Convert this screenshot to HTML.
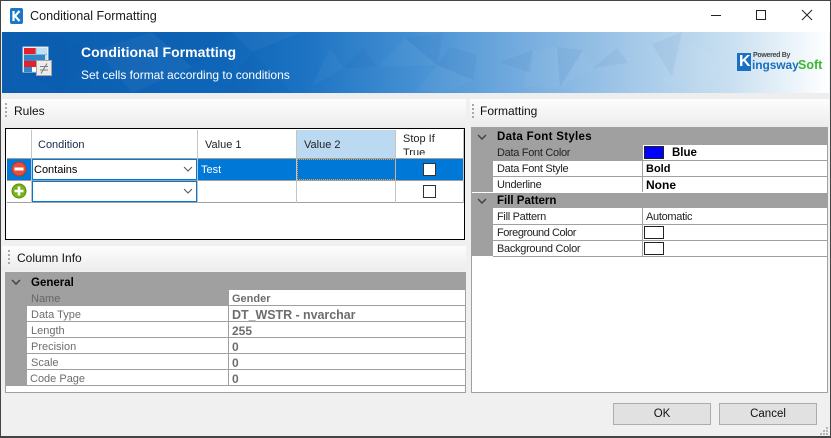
<!DOCTYPE html>
<html><head><meta charset="utf-8"><style>
html,body{margin:0;padding:0}
body{width:831px;height:438px;overflow:hidden;position:relative;background:#f0f0f0;font-family:"Liberation Sans",sans-serif;color:#000}
div{position:absolute;box-sizing:border-box}
.t{white-space:nowrap;font-size:11px;line-height:16px;height:16px}
.l{letter-spacing:-.3px}
.b{font-weight:bold}
.g{color:#6d6d6d}
.w{background:#fff}
.ln{background:#a0a0a0}
.grip{width:2px;height:14px;background:repeating-linear-gradient(#a8a8a8 0 2px,transparent 2px 4px)}
.bar{background:linear-gradient(#fdfdfd,#ececec)}
.btn{background:#e1e1e1;border:1px solid #adadad;text-align:center;font-size:11.500px;line-height:20px;height:22px;width:98px;color:#111}
</style></head><body>
<div class="w" style="left:0;top:0;width:831px;height:32px"></div>
<div style="left:0;top:0;width:831px;height:438px;border:1px solid #444;border-width:1px 1px 2px 1px;pointer-events:none;z-index:9"></div>
<svg style="position:absolute;left:10px;top:8px" width="14" height="16"><rect width="13" height="16" rx="2" fill="#1976c8"/><path d="M3.500 3v10M9.500 3L5 8l4.500 5" stroke="#fff" stroke-width="2.200" fill="none"/></svg>
<div class="t" style="left:30px;top:8px;font-size:12.600px;color:#1a1a1a">Conditional Formatting</div>
<svg style="position:absolute;left:700px;top:5px" width="131" height="22" fill="none" stroke="#222"><path d="M11 10.500h10"/><rect x="56.500" y="5.500" width="9" height="9"/><path d="M102 5l10 10M112 5l-10 10"/></svg>

<svg style="position:absolute;left:2px;top:32px" width="827" height="61">
<defs><linearGradient id="bg" x1="0" x2="1" y1="0" y2="0"><stop offset="0" stop-color="#0b5db0"/><stop offset=".27" stop-color="#0f66b8"/><stop offset=".36" stop-color="#1b72c2"/><stop offset=".5" stop-color="#4590d3"/><stop offset=".6" stop-color="#6aa6dc"/><stop offset=".76" stop-color="#a3c8e8"/><stop offset=".88" stop-color="#c8dff0"/><stop offset=".95" stop-color="#e8f2f9"/><stop offset="1" stop-color="#fff"/></linearGradient></defs>
<rect width="827" height="61" fill="url(#bg)"/>
<g fill="#003f8a" fill-opacity=".05">
<polygon points="40,0 95,18 60,61 20,40"/><polygon points="150,0 230,0 190,35"/><polygon points="250,20 290,61 220,61"/>
<polygon points="341,36 376,35 361,16"/><polygon points="403,6 441,1 435,33"/><polygon points="435,33 448,15 475,23 471,48"/><polygon points="498,30 531,18 528,41"/><polygon points="555,15 581,18 558,55"/><polygon points="591,36 615,16 626,31"/><polygon points="650,12 680,0 670,45"/>
</g>
<g fill="#fff" fill-opacity=".035">
<polygon points="95,18 150,0 190,35 130,61"/><polygon points="230,0 300,0 250,20"/><polygon points="328,16 341,36 310,55"/><polygon points="403,6 435,33 376,35"/><polygon points="436,33 471,48 445,60 413,60"/><polygon points="531,18 555,15 558,55 520,55"/><polygon points="581,18 591,36 558,55"/><polygon points="690,10 720,30 700,61 660,50"/>
</g>
</svg>
<div style="left:1px;top:93px;width:829px;height:6px;background:#eeeeee"></div>

<svg style="position:absolute;left:22px;top:46px" width="32" height="31">
<rect x="1" y="1" width="25" height="25" fill="#fff" stroke="#c9dcea"/>
<rect x="2" y="2" width="12" height="6" fill="#e8202a"/><rect x="14" y="2" width="11" height="6" fill="#bfe0f2"/>
<rect x="14" y="9" width="11" height="6" fill="#bfe0f2"/>
<rect x="2" y="9" width="21" height="6" fill="#2f86c8"/><rect x="2" y="15" width="14" height="6" fill="#e8202a"/><rect x="2" y="21" width="8" height="5" fill="#2f86c8"/>
<path d="M14 2v6M2 8.500h23" stroke="#8fb7d2"/>
<rect x="14.500" y="14.500" width="15" height="15" fill="#ececec" stroke="#a5a5a5"/>
<path d="M18 20.500h8M18 24h8M25 17.500l-6 10" stroke="#808080" stroke-width="1.100" fill="none"/>
</svg>
<div class="t b" style="left:81px;top:44px;font-size:14px;letter-spacing:.05px;color:#fff">Conditional Formatting</div>
<div class="t" style="left:81px;top:67px;font-size:12px;color:#fff">Set cells format according to conditions</div>

<div style="left:737px;top:53px;width:14px;height:18px;background:#1a70c4"></div>
<div class="t b" style="left:739px;top:53px;font-size:16px;line-height:18px;height:18px;color:#fff">K</div>
<div class="t b" style="left:753px;top:51px;font-size:7px;line-height:10px;height:10px;letter-spacing:-.3px;color:#444">Powered By</div>
<div class="t b" style="left:752px;top:57px;font-size:12px;letter-spacing:-.1px;color:#1a6fc0">ingsway</div>
<div class="t b" style="left:798px;top:57px;font-size:12.500px;color:#3cb82e">Soft</div>

<div class="bar" style="left:2px;top:99px;width:464px;height:29px"></div>
<div class="bar" style="left:470px;top:99px;width:359px;height:28px"></div>
<div class="grip" style="left:5px;top:103px"></div>
<div class="t" style="left:14px;top:103px;font-size:12px;color:#111">Rules</div>
<div class="grip" style="left:472px;top:104px"></div>
<div class="t" style="left:480px;top:103px;font-size:12px;color:#111">Formatting</div>

<!-- Rules grid -->
<div class="w" style="left:5px;top:128px;width:460px;height:112px;border:1px solid #000"></div>
<div style="left:297px;top:130px;width:99px;height:28px;background:#bbdaf2"></div>
<div style="left:7px;top:159px;width:456px;height:21px;background:#0078d7"></div>
<div class="ln" style="left:7px;top:158px;width:456px;height:1px"></div>
<div class="ln" style="left:7px;top:180px;width:456px;height:1px"></div>
<div class="ln" style="left:7px;top:202px;width:456px;height:1px"></div>
<div style="left:31px;top:130px;width:1px;height:73px;background:#c4c4c4"></div>
<div style="left:197px;top:130px;width:1px;height:73px;background:#c4c4c4"></div>
<div style="left:296px;top:130px;width:1px;height:73px;background:#c4c4c4"></div>
<div style="left:395px;top:130px;width:1px;height:73px;background:#c4c4c4"></div>
<div style="left:463px;top:130px;width:1px;height:73px;background:#c4c4c4"></div>
<div class="t" style="left:38px;top:137px;color:#152a4a">Condition</div>
<div class="t" style="left:205px;top:137px;color:#222">Value 1</div>
<div class="t" style="left:304px;top:137px;color:#222">Value 2</div>
<div style="left:396px;top:130px;width:66px;height:25px;overflow:hidden"><div class="t" style="left:7px;top:2px;line-height:14px;white-space:normal;width:40px;height:28px;color:#222">Stop If True</div></div>

<div class="w" style="left:32px;top:159px;width:165px;height:21px;border:1px solid #0078d7"></div>
<div class="w" style="left:32px;top:181px;width:165px;height:21px;border:1px solid #0078d7"></div>
<div class="t" style="left:34px;top:162px">Contains</div>
<svg style="position:absolute;left:183px;top:166px" width="11" height="30" fill="none" stroke="#555"><path d="M1 1l4 4 4-4M1 23l4 4 4-4"/></svg>
<div class="t" style="left:201px;top:162px;color:#fff">Test</div>
<div style="left:297px;top:159px;width:99px;height:21px;border:1px dotted #e8a040"></div>
<div class="w" style="left:423px;top:163px;width:13px;height:13px;border:1px solid #333"></div>
<div class="w" style="left:423px;top:185px;width:13px;height:13px;border:1px solid #333"></div>
<svg style="position:absolute;left:11px;top:161px" width="16" height="40">
<circle cx="8" cy="8" r="7" fill="#e4503c" stroke="#c0331f"/><rect x="3.500" y="6.500" width="9" height="3" fill="#fff"/>
<circle cx="8" cy="30" r="7" fill="#7ab317" stroke="#5b8c10"/><path d="M8 25.500v9M3.500 30h9" stroke="#fff" stroke-width="2.600"/>
</svg>

<!-- Column Info -->
<div class="bar" style="left:2px;top:246px;width:464px;height:25px"></div>
<div class="grip" style="left:8px;top:250px"></div>
<div class="t" style="left:17px;top:250px;font-size:12px;color:#111">Column Info</div>
<div class="w" style="left:5px;top:272px;width:461px;height:121px;border:1px solid #a0a0a0"></div>
<div style="left:5px;top:272px;width:461px;height:18px;background:#a0a0a0"></div>
<div style="left:5px;top:290px;width:22px;height:96px;background:#a0a0a0"></div>
<div style="left:27px;top:290px;width:201px;height:15px;background:#a0a0a0"></div>
<div class="ln" style="left:27px;top:305px;width:438px;height:1px"></div>
<div class="ln" style="left:27px;top:321px;width:438px;height:1px"></div>
<div class="ln" style="left:27px;top:337px;width:438px;height:1px"></div>
<div class="ln" style="left:27px;top:353px;width:438px;height:1px"></div>
<div class="ln" style="left:27px;top:369px;width:438px;height:1px"></div>
<div class="ln" style="left:27px;top:385px;width:438px;height:1px"></div>
<div class="ln" style="left:228px;top:290px;width:1px;height:96px"></div>
<svg style="position:absolute;left:11px;top:279px" width="10" height="6" fill="none" stroke="#444" stroke-width="1.500"><path d="M1 1l4 4 4-4"/></svg>
<div class="t b" style="left:31px;top:275px;font-size:11.500px">General</div>
<div class="t" style="left:31px;top:291px;color:#666">Name</div>
<div class="t g" style="left:31px;top:307px">Data Type</div>
<div class="t g" style="left:31px;top:323px">Length</div>
<div class="t g" style="left:31px;top:339px">Precision</div>
<div class="t g" style="left:31px;top:355px">Scale</div>
<div class="t g" style="left:30px;top:371px">Code Page</div>
<div class="t b g" style="left:232px;top:291px">Gender</div>
<div class="t b g" style="left:232px;top:307px;font-size:12.500px;letter-spacing:-.05px">DT_WSTR - nvarchar</div>
<div class="t b g" style="left:232px;top:323px;font-size:12px">255</div>
<div class="t b g" style="left:232px;top:339px;font-size:12px">0</div>
<div class="t b g" style="left:232px;top:355px;font-size:12px">0</div>
<div class="t b g" style="left:232px;top:371px;font-size:12px">0</div>

<!-- Formatting -->
<div class="w" style="left:471px;top:127px;width:357px;height:266px;border:1px solid #a0a0a0"></div>
<div style="left:472px;top:127px;width:355px;height:18px;background:#a0a0a0"></div>
<div style="left:472px;top:145px;width:21px;height:47px;background:#a0a0a0"></div>
<div style="left:493px;top:145px;width:149px;height:15px;background:#a0a0a0"></div>
<div style="left:472px;top:193px;width:355px;height:15px;background:#a0a0a0"></div>
<div style="left:472px;top:208px;width:21px;height:48px;background:#a0a0a0"></div>
<div class="ln" style="left:493px;top:160px;width:334px;height:1px"></div>
<div class="ln" style="left:493px;top:176px;width:334px;height:1px"></div>
<div class="ln" style="left:493px;top:224px;width:334px;height:1px"></div>
<div class="ln" style="left:493px;top:240px;width:334px;height:1px"></div>
<div class="ln" style="left:493px;top:256px;width:334px;height:1px"></div>
<div class="ln" style="left:642px;top:145px;width:1px;height:47px"></div>
<div class="ln" style="left:642px;top:208px;width:1px;height:48px"></div>
<svg style="position:absolute;left:477px;top:134px" width="10" height="6" fill="none" stroke="#444" stroke-width="1.500"><path d="M1 1l4 4 4-4"/></svg>
<svg style="position:absolute;left:477px;top:198px" width="10" height="6" fill="none" stroke="#444" stroke-width="1.500"><path d="M1 1l4 4 4-4"/></svg>
<div class="t b" style="left:497px;top:129px;font-size:11.500px;letter-spacing:.3px">Data Font Styles</div>
<div class="t l" style="left:497px;top:145px;color:#222">Data Font Color</div>
<div class="t l" style="left:497px;top:161px;color:#222">Data Font Style</div>
<div class="t l" style="left:497px;top:177px;color:#222">Underline</div>
<div class="t b" style="left:497px;top:193px;font-size:11.500px">Fill Pattern</div>
<div class="t l" style="left:497px;top:209px;color:#222">Fill Pattern</div>
<div class="t" style="left:497px;top:225px;color:#222;letter-spacing:-.45px">Foreground Color</div>
<div class="t l" style="left:497px;top:241px;color:#222">Background Color</div>
<div style="left:644px;top:146px;width:20px;height:13px;background:#0000ff;border:1px solid #222"></div>
<div class="t b" style="left:672px;top:145px;font-size:11.500px">Blue</div>
<div class="t b" style="left:646px;top:161px">Bold</div>
<div class="t b" style="left:646px;top:177px;font-size:12px">None</div>
<div class="t l" style="left:646px;top:209px;color:#222">Automatic</div>
<div class="w" style="left:644px;top:226px;width:20px;height:13px;border:1px solid #222"></div>
<div class="w" style="left:644px;top:242px;width:20px;height:13px;border:1px solid #222"></div>

<div class="btn" style="left:613px;top:403px">OK</div>
<div class="btn" style="left:719px;top:403px">Cancel</div>
<svg style="position:absolute;left:819px;top:426px" width="10" height="10" fill="#b5b5b5"><rect x="7" y="1" width="2" height="2"/><rect x="4" y="4" width="2" height="2"/><rect x="7" y="4" width="2" height="2"/><rect x="1" y="7" width="2" height="2"/><rect x="4" y="7" width="2" height="2"/><rect x="7" y="7" width="2" height="2"/></svg>
</body></html>
